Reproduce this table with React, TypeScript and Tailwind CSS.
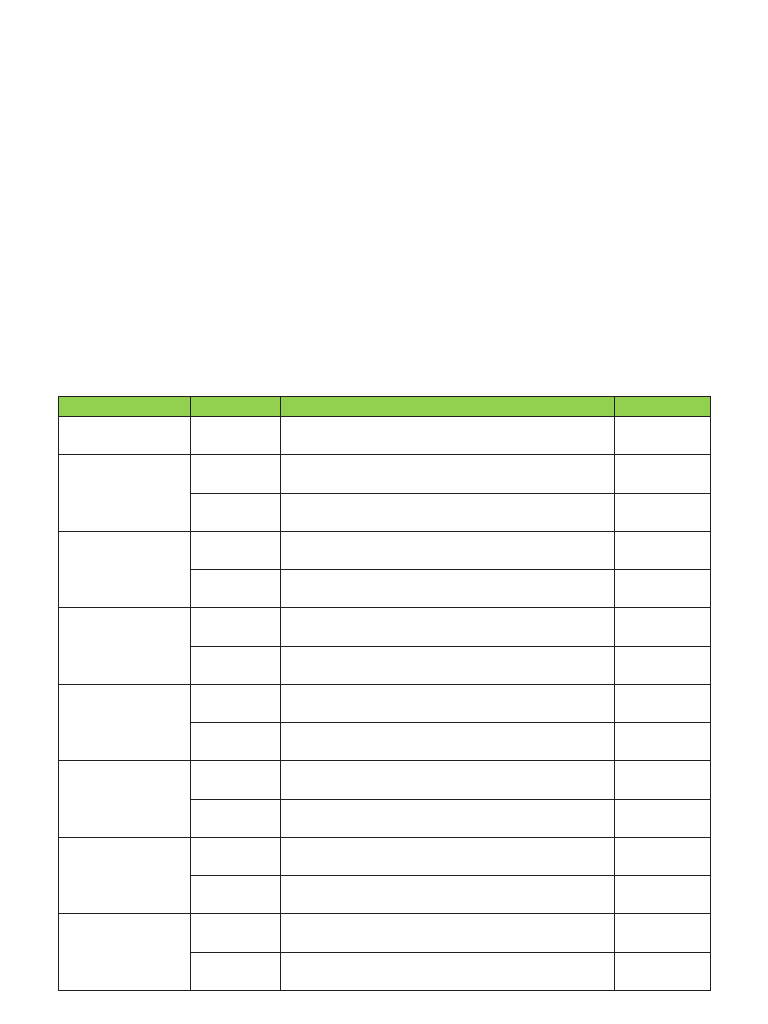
const groups = 7

function Cell({ rowSpan }: { rowSpan?: number }) {
  return <td rowSpan={rowSpan} className="border border-[#231f20] p-0"></td>
}

export default function App() {
  return (
    <div className="min-h-[1024px] bg-white pt-[396px] pl-[58px] font-['Liberation_Sans',sans-serif]">
      <table className="w-[652px] table-fixed border-collapse">
        <colgroup>
          <col className="w-[132px]" />
          <col className="w-[90px]" />
          <col className="w-[334px]" />
          <col className="w-[96px]" />
        </colgroup>
        <thead>
          <tr className="h-[20px] bg-[#92d050]">
            <th className="border border-[#231f20] p-0"></th>
            <th className="border border-[#231f20] p-0"></th>
            <th className="border border-[#231f20] p-0"></th>
            <th className="border border-[#231f20] p-0"></th>
          </tr>
        </thead>
        <tbody>
          <tr className="h-[38.25px]">
            <Cell />
            <Cell />
            <Cell />
            <Cell />
          </tr>
          {Array.from({ length: groups }).map((_, i) => (
            <>
              <tr key={`a${i}`} className="h-[38.25px]">
                <Cell rowSpan={2} />
                <Cell />
                <Cell />
                <Cell />
              </tr>
              <tr key={`b${i}`} className="h-[38.25px]">
                <Cell />
                <Cell />
                <Cell />
              </tr>
            </>
          ))}
        </tbody>
      </table>
    </div>
  )
}
